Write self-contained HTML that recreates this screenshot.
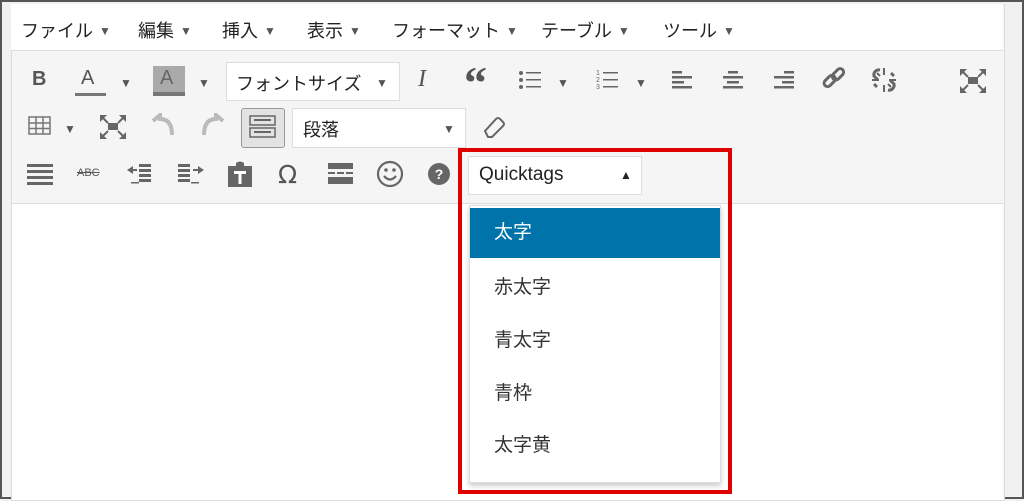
<!DOCTYPE html>
<html><head><meta charset="utf-8"><style>
body{margin:0;width:1024px;height:499px;overflow:hidden;background:#f1f1f1;font-family:"Liberation Sans","Noto Sans CJK JP",sans-serif;position:relative}
.frame{position:absolute;left:0;top:0;width:1020px;height:495px;border:2px solid #555;}
.ed{position:absolute;left:11px;top:4px;width:992px;height:495px;border:1px solid #ddd;background:#f5f5f5}
.menu{position:absolute;left:11px;top:4px;width:992px;height:46px;background:#fff;border-bottom:1px solid #ddd}
.menu span{position:absolute;top:13px;font-size:18px;color:#222}
.menu i{font-style:normal;font-size:12px;color:#555;margin-left:6px;position:relative;top:-2px}
.content{position:absolute;left:12px;top:203px;width:991px;height:296px;background:#fff;border-top:1px solid #ddd}
.ic{position:absolute;color:#555}
.box{position:absolute;background:#fff;border:1px solid #ddd}
.arr{position:absolute;font-size:12px;color:#555}
.red{position:absolute;left:458px;top:148px;width:266px;height:338px;border:4px solid #e00000}
.dd{position:absolute;left:469px;top:205px;width:250px;height:276px;background:#fff;border:1px solid #ddd;box-shadow:0 3px 5px rgba(0,0,0,.2)}
.it{position:absolute;left:0;width:250px;height:50px;font-size:19px;color:#333;line-height:50px}
.it span{margin-left:24px}
</style></head><body>
<div class="frame"></div>
<div class="ed"></div>
<div class="menu">
<span style="left:10px">ファイル<i>▼</i></span>
<span style="left:127px">編集<i>▼</i></span>
<span style="left:211px">挿入<i>▼</i></span>
<span style="left:296px">表示<i>▼</i></span>
<span style="left:381px">フォーマット<i>▼</i></span>
<span style="left:530px">テーブル<i>▼</i></span>
<span style="left:652px">ツール<i>▼</i></span>
</div>
<!-- row1 -->
<div class="ic" style="left:32px;top:68px;font-size:20px;font-weight:bold">B</div>
<div class="ic" style="left:81px;top:67px;font-size:20px">A</div>
<div style="position:absolute;left:75px;top:93px;width:31px;height:3px;background:#777"></div>
<div class="arr" style="left:120px;top:76px">▼</div>
<div style="position:absolute;left:153px;top:66px;width:32px;height:26px;background:#aaa"></div>
<div class="ic" style="left:160px;top:67px;font-size:20px;color:#666">A</div>
<div style="position:absolute;left:153px;top:92px;width:32px;height:4px;background:#777"></div>
<div class="arr" style="left:198px;top:76px">▼</div>
<div class="box" style="left:226px;top:62px;width:172px;height:37px"></div>
<div style="position:absolute;left:236px;top:70px;font-size:18px;color:#222">フォントサイズ</div>
<div class="arr" style="left:376px;top:76px">▼</div>
<div class="ic" style="left:418px;top:66px;font-size:24px;font-style:italic;font-family:'Liberation Serif',serif">I</div>
<div class="ic" style="left:464px;top:60px;font-size:46px;font-weight:bold;font-family:'Liberation Serif',serif;line-height:46px">“</div>
<svg class="ic" style="left:518px;top:70px" width="24" height="20"><g fill="#666"><circle cx="3" cy="3" r="2"/><circle cx="3" cy="10" r="2"/><circle cx="3" cy="17" r="2"/><rect x="8" y="2" width="15" height="1.5"/><rect x="8" y="9" width="15" height="1.5"/><rect x="8" y="16" width="15" height="1.5"/></g></svg>
<div class="arr" style="left:557px;top:76px">▼</div>
<svg class="ic" style="left:596px;top:68px" width="24" height="22"><g fill="#666" font-size="7" font-family="Liberation Sans"><text x="0" y="7">1</text><text x="0" y="14">2</text><text x="0" y="21">3</text><rect x="7" y="4" width="15" height="1.5"/><rect x="7" y="11" width="15" height="1.5"/><rect x="7" y="18" width="15" height="1.5"/></g></svg>
<div class="arr" style="left:635px;top:76px">▼</div>
<svg class="ic" style="left:672px;top:70px" width="22" height="20"><g fill="#666"><rect x="0" y="1" width="10" height="2.5"/><rect x="0" y="6" width="20" height="2.5"/><rect x="0" y="11" width="12" height="2.5"/><rect x="0" y="16" width="20" height="2.5"/></g></svg>
<svg class="ic" style="left:723px;top:70px" width="22" height="20"><g fill="#666"><rect x="5" y="1" width="10" height="2.5"/><rect x="0" y="6" width="20" height="2.5"/><rect x="4" y="11" width="12" height="2.5"/><rect x="0" y="16" width="20" height="2.5"/></g></svg>
<svg class="ic" style="left:774px;top:70px" width="22" height="20"><g fill="#666"><rect x="10" y="1" width="10" height="2.5"/><rect x="0" y="6" width="20" height="2.5"/><rect x="8" y="11" width="12" height="2.5"/><rect x="0" y="16" width="20" height="2.5"/></g></svg>
<svg class="ic" style="left:821px;top:67px" width="26" height="26"><g fill="none" stroke="#666" stroke-width="3"><rect x="2" y="11" width="13" height="7" rx="3.5" transform="rotate(-45 8 14)"/><rect x="11" y="4" width="13" height="7" rx="3.5" transform="rotate(-45 17 8)"/></g></svg>
<svg class="ic" style="left:870px;top:66px" width="28" height="28"><g fill="none" stroke="#666" stroke-width="3"><path d="M10 4 A5 5 0 0 0 4 10 L8 14 M18 24 A5 5 0 0 0 24 18 L20 14 M4 18 L7 21 M21 7 L24 10"/><path d="M14 2 L14 9 M14 19 L14 26 M2 14 L9 14 M19 14 L26 14 M7 7 L10 10 M18 18 L21 21" stroke-width="2"/></g></svg>
<svg class="ic" style="left:960px;top:69px" width="26" height="24"><g fill="#666"><rect x="8" y="8" width="10" height="7"/><path d="M0 0 L7 0 L0 7Z M26 0 L19 0 L26 7Z M0 24 L7 24 L0 17Z M26 24 L19 24 L26 17Z"/></g><g stroke="#666" stroke-width="2"><path d="M2 2 L8 8 M24 2 L18 8 M2 22 L8 16 M24 22 L18 16"/></g></svg>
<!-- row2 -->
<svg class="ic" style="left:28px;top:116px" width="24" height="20"><g fill="none" stroke="#777" stroke-width="1.5"><rect x="1" y="1" width="21" height="17"/><path d="M1 7H22M1 12.5H22M8 1V18M15 1V18"/></g></svg>
<div class="arr" style="left:64px;top:122px">▼</div>
<svg class="ic" style="left:100px;top:115px" width="26" height="24"><g fill="#666"><rect x="8" y="8" width="10" height="7"/><path d="M0 0 L7 0 L0 7Z M26 0 L19 0 L26 7Z M0 24 L7 24 L0 17Z M26 24 L19 24 L26 17Z"/></g><g stroke="#666" stroke-width="2"><path d="M2 2 L8 8 M24 2 L18 8 M2 22 L8 16 M24 22 L18 16"/></g></svg>
<svg class="ic" style="left:150px;top:113px" width="28" height="26"><path d="M3 8 L10 2 L10 6 Q22 6 22 22" fill="none" stroke="#bbb" stroke-width="4"/></svg>
<svg class="ic" style="left:198px;top:113px" width="28" height="26"><path d="M25 8 L18 2 L18 6 Q6 6 6 22" fill="none" stroke="#bbb" stroke-width="4"/></svg>
<div style="position:absolute;left:241px;top:108px;width:42px;height:38px;background:#e3e3e3;border:1px solid #999;border-radius:3px"></div>
<svg class="ic" style="left:249px;top:115px" width="28" height="24"><g fill="none" stroke="#666" stroke-width="1.5"><rect x="1" y="1" width="25" height="9"/><rect x="1" y="13" width="25" height="9"/></g><g fill="#666"><rect x="5" y="4" width="17" height="2"/><rect x="5" y="16" width="17" height="2"/></g></svg>
<div class="box" style="left:292px;top:108px;width:172px;height:38px"></div>
<div style="position:absolute;left:303px;top:116px;font-size:18px;color:#222">段落</div>
<div class="arr" style="left:443px;top:122px">▼</div>
<svg class="ic" style="left:482px;top:115px" width="24" height="24"><path d="M3 16 L14 4 Q16 2 18 4 L21 7 Q23 9 21 11 L10 22 L6 22 Z" fill="none" stroke="#666" stroke-width="2"/></svg>
<!-- row3 -->
<svg class="ic" style="left:27px;top:163px" width="26" height="22"><g fill="#666"><rect x="0" y="1" width="26" height="3"/><rect x="0" y="7" width="26" height="3"/><rect x="0" y="13" width="26" height="3"/><rect x="0" y="19" width="26" height="3"/></g></svg>
<div class="ic" style="left:77px;top:167px;font-size:11px;text-decoration:line-through">ABC</div>
<svg class="ic" style="left:127px;top:163px" width="26" height="22"><g fill="#666"><path d="M0 7 L6 3 L6 11Z"/><rect x="6" y="6" width="4" height="2"/><rect x="12" y="1" width="12" height="3"/><rect x="12" y="6" width="12" height="3"/><rect x="12" y="11" width="12" height="3"/><rect x="12" y="16" width="12" height="3"/><rect x="4" y="19" width="8" height="1.5"/></g></svg>
<svg class="ic" style="left:178px;top:163px" width="26" height="22"><g fill="#666"><path d="M26 7 L20 3 L20 11Z"/><rect x="15" y="6" width="5" height="2"/><rect x="0" y="1" width="12" height="3"/><rect x="0" y="6" width="12" height="3"/><rect x="0" y="11" width="12" height="3"/><rect x="0" y="16" width="12" height="3"/><rect x="13" y="19" width="8" height="1.5"/></g></svg>
<svg class="ic" style="left:227px;top:160px" width="26" height="28"><path d="M1 6 H9 V3 Q13 0 17 3 V6 H25 V27 H1Z" fill="#666"/><path d="M7 11 H19 V14 H14.5 V24 H11.5 V14 H7Z" fill="#fff"/></svg>
<div class="ic" style="left:278px;top:160px;font-size:25px;font-family:'DejaVu Sans',sans-serif">Ω</div>
<svg class="ic" style="left:328px;top:163px" width="26" height="22"><g fill="#666"><rect x="0" y="0" width="25" height="6"/><rect x="0" y="9" width="7" height="2"/><rect x="9" y="9" width="7" height="2"/><rect x="18" y="9" width="7" height="2"/><rect x="0" y="14" width="25" height="7"/></g></svg>
<svg class="ic" style="left:376px;top:160px" width="28" height="28"><g fill="none" stroke="#666" stroke-width="2.2"><circle cx="14" cy="14" r="12"/><path d="M8 16 Q14 23 20 16"/></g><circle cx="10" cy="10" r="1.8" fill="#666"/><circle cx="18" cy="10" r="1.8" fill="#666"/></svg>
<svg class="ic" style="left:428px;top:163px" width="24" height="24"><circle cx="11" cy="11" r="11" fill="#666"/><text x="11" y="16" text-anchor="middle" font-size="14" font-weight="bold" fill="#fff" font-family="Liberation Sans">?</text></svg>
<div class="content"></div>
<div class="box" style="left:468px;top:156px;width:172px;height:37px"></div>
<div style="position:absolute;left:479px;top:164px;font-size:19px;color:#222">Quicktags</div>
<div style="position:absolute;left:620px;top:168px;font-size:12px;color:#222">▲</div>
<div class="dd">
<div class="it" style="top:2px;background:#0073aa;color:#fff"><span>太字</span></div>
<div class="it" style="top:57px"><span>赤太字</span></div>
<div class="it" style="top:110px"><span>青太字</span></div>
<div class="it" style="top:163px"><span>青枠</span></div>
<div class="it" style="top:215px"><span>太字黄</span></div>
</div>
<div class="red"></div>
</body></html>
